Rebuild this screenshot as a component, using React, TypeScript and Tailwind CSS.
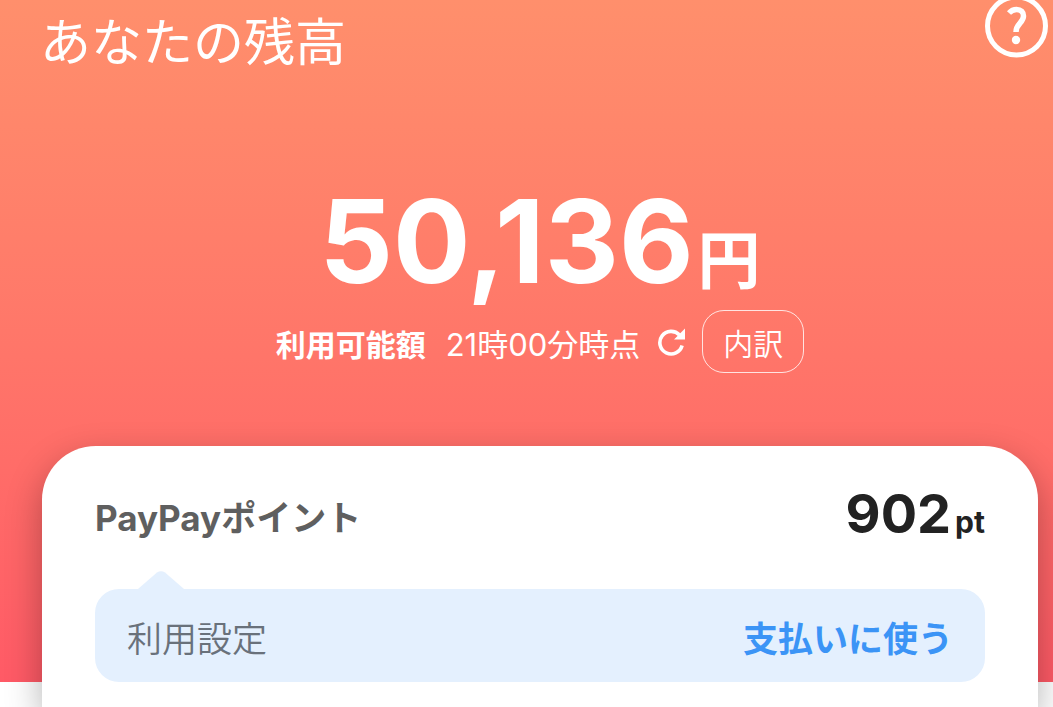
import type { ReactNode } from 'react';

export default function App() {
  return (
    <div className="flex min-h-screen flex-col overflow-hidden bg-white font-['Inter','Noto_Sans_CJK_JP',sans-serif]">
      <BalanceHeader />
      {/* The card is pulled up over the gradient */}
      <PointCard />
    </div>
  );
}

function BalanceHeader() {
  return (
    <header className="bg-linear-to-b from-[#ff8f6c] to-[#ff5a66] pb-[309px] text-white">
      <div className="flex h-[84px] items-center justify-between pr-[5px] pl-10">
        <h1 className="text-[51px] leading-none font-normal">あなたの残高</h1>
        <button type="button" aria-label="ヘルプ" className="mb-8">
          <HelpIcon />
        </button>
      </div>

      <div className="flex flex-col items-center gap-[10px] pt-[100px] pr-[15px] pl-[42px]">
        <p className="flex h-[116px] items-baseline gap-1 font-bold">
          <span className="text-[115px] leading-none">50,136</span>
          <span className="text-[63px] leading-none">円</span>
        </p>
        <div className="flex h-[63px] items-center text-[30px] leading-none">
          <span className="pt-1.5 font-bold">利用可能額</span>
          <span className="ml-5 pt-1.5 text-[31px] leading-none font-normal">21時00分時点</span>
          <button type="button" aria-label="更新" className="ml-4">
            <RefreshIcon />
          </button>
          <button
            type="button"
            className="ml-4 h-[63px] w-[102px] rounded-[22px] border border-white/80 pt-1 font-[350]"
          >
            内訳
          </button>
        </div>
      </div>
    </header>
  );
}

function PointCard() {
  return (
    <main className="relative -mt-[236px] mr-[15px] ml-[42px] flex-1 rounded-t-[54px] bg-white px-[53px] pt-10 pb-6 shadow-[0_14px_36px_rgba(0,0,0,0.3)]">
      <div className="flex h-[60px] items-center justify-between font-bold">
        <h2 className="pt-1 text-[35px] leading-none text-[#5f5f5f]">PayPayポイント</h2>
        <p className="flex items-baseline gap-1 pb-1 text-[#222222]">
          <span className="text-[54px] leading-none">902</span>
          <span className="text-[30px] leading-none">pt</span>
        </p>
      </div>

      <Balloon>
        <span className="font-[350] text-[#69717b]">利用設定</span>
        <button type="button" className="font-bold text-[#3b94f6]">
          支払いに使う
        </button>
      </Balloon>
    </main>
  );
}

function Balloon({ children }: { children: ReactNode }) {
  return (
    <div className="mt-[25px]">
      <svg viewBox="0 0 46 18" className="ml-[43px] block h-[18px] w-[46px] text-[#e4f0fe]" aria-hidden="true">
        <path d="M0 18L19 1.5Q23-1.2 27 1.5L46 18Z" fill="currentColor" />
      </svg>
      <div className="flex h-[93px] items-center justify-between rounded-[24px] bg-[#e4f0fe] px-8 pt-2 text-[35px] leading-none">
        {children}
      </div>
    </div>
  );
}

function HelpIcon() {
  return (
    <svg viewBox="0 0 63 63" className="block size-[63px]" fill="none" aria-hidden="true">
      <circle cx="31.5" cy="31" r="29" stroke="currentColor" strokeWidth="5" />
      <path
        d="M24 18C26.500 15.300 29 14.500 31.500 14.500C36 14.500 38.500 17 38.500 21C38.500 28 31 28.500 31 37"
        stroke="currentColor"
        strokeWidth="5.500"
      />
      <circle cx="31" cy="45" r="4.200" fill="currentColor" />
    </svg>
  );
}

function RefreshIcon() {
  return (
    <svg viewBox="0 0 30 30" className="block size-[30px]" fill="none" aria-hidden="true">
      <path d="M26.100 18.500A11.300 11.300 0 1 1 23.500 8" stroke="currentColor" strokeWidth="3.600" />
      <path d="M29 1.500V12.500H18Z" fill="currentColor" />
    </svg>
  );
}
